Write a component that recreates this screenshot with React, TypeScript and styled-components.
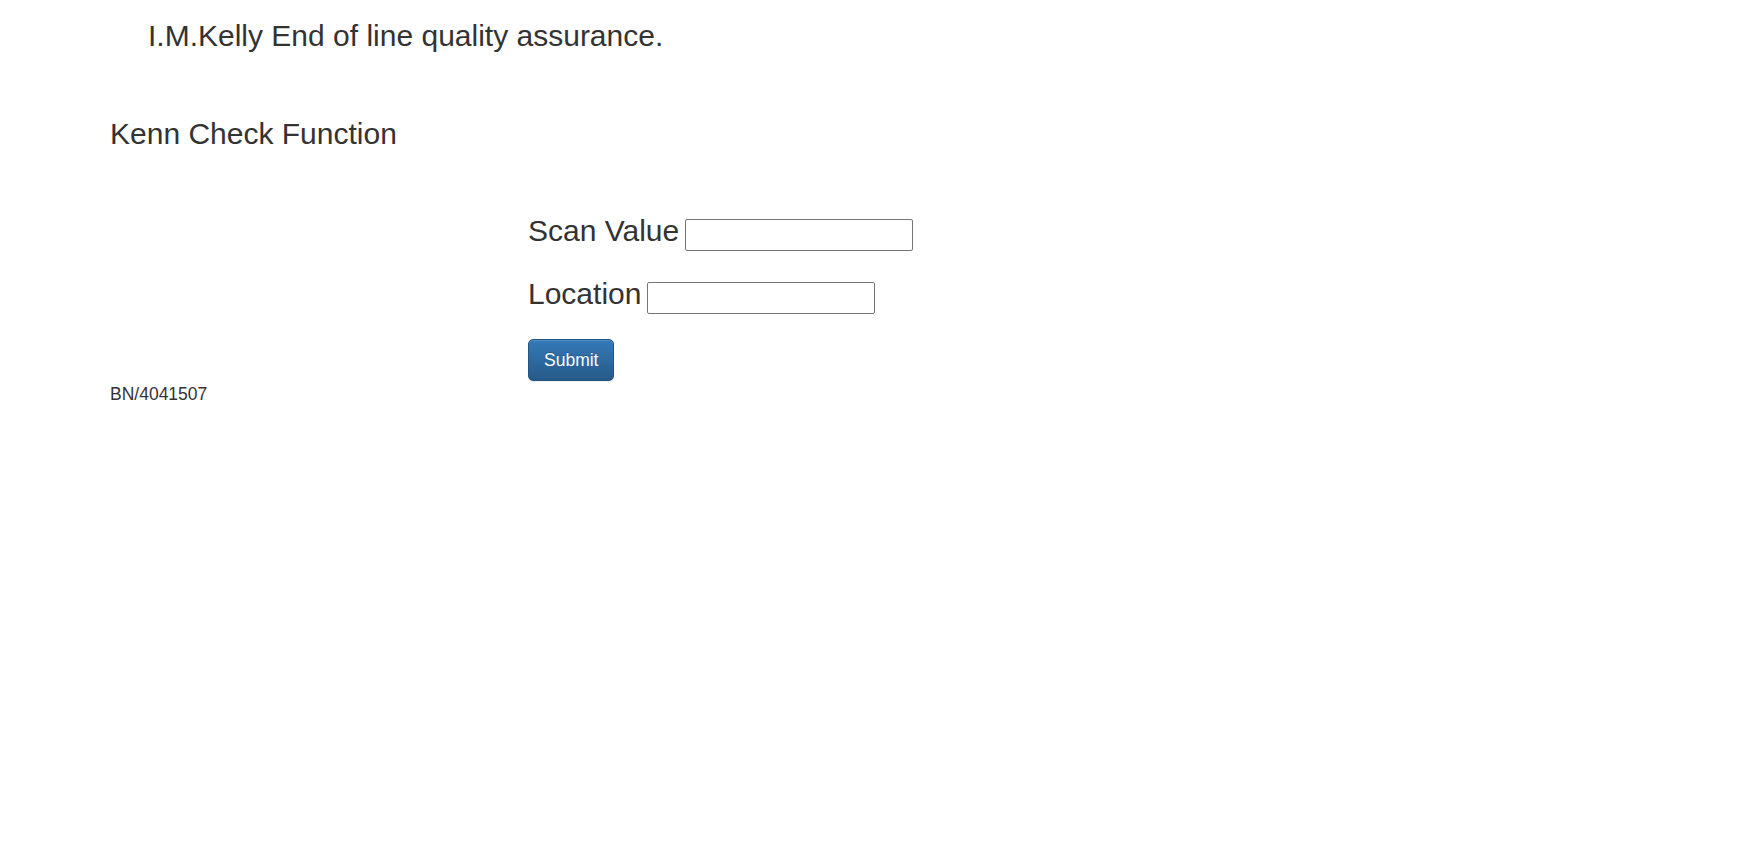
import React from "react";
import styled, { createGlobalStyle } from "styled-components";

const GlobalStyle = createGlobalStyle`
  html, body {
    margin: 0;
    padding: 0;
    background: #ffffff;
  }
  body {
    font-family: "Liberation Sans", Arial, Helvetica, sans-serif;
    font-size: 17.5px;
    line-height: 25px;
    color: #333333;
  }
  * { box-sizing: border-box; }
`;

const Page = styled.div`
  padding: 19px 0 0 110px;
`;

const SiteTitle = styled.h1`
  margin: 0;
  padding-left: 38px;
  font-size: 30px;
  line-height: 33px;
  font-weight: 400;
`;

const SectionHeading = styled.h3`
  margin: 65px 0 0 0;
  font-size: 30px;
  line-height: 33px;
  font-weight: 400;
`;

const FormArea = styled.form`
  margin: 64px 0 0 418px;
  display: flex;
  flex-direction: column;
  align-items: flex-start;
  gap: 27px;
`;

const FieldRow = styled.div`
  display: flex;
  align-items: flex-start;
  gap: 6px;
  height: 36px;
`;

const FieldLabel = styled.label`
  font-size: 30px;
  line-height: 33px;
`;

const TextInput = styled.input`
  margin-top: 5px;
  width: 228px;
  height: 32px;
  border: 1px solid #767676;
  border-radius: 2px;
  padding: 1px 2px;
  font-family: "Liberation Sans", Arial, sans-serif;
  font-size: 16px;
  background: #fff;
`;

const SubmitButton = styled.button`
  margin-top: -1px;
  font-family: "Liberation Sans", Arial, sans-serif;
  font-size: 17.5px;
  line-height: 25px;
  padding: 7.5px 15px;
  color: #ffffff;
  border: 1px solid #245580;
  border-radius: 5px;
  background-image: linear-gradient(to bottom, #337ab7 0%, #265a88 100%);
  box-shadow: inset 0 1px 0 rgba(255, 255, 255, 0.15), 0 1px 1px rgba(0, 0, 0, 0.075);
  text-shadow: 0 -1px 0 rgba(0, 0, 0, 0.2);
  cursor: pointer;
`;

const BatchNumber = styled.div`
  font-size: 17.5px;
  line-height: 25px;
  margin-top: 1px;
`;

export default function App() {
  return (
    <>
      <GlobalStyle />
      <Page>
        <SiteTitle>I.M.Kelly End of line quality assurance.</SiteTitle>
        <SectionHeading>Kenn Check Function</SectionHeading>
        <FormArea onSubmit={(e) => e.preventDefault()}>
          <FieldRow>
            <FieldLabel htmlFor="scan">Scan Value</FieldLabel>
            <TextInput id="scan" type="text" />
          </FieldRow>
          <FieldRow>
            <FieldLabel htmlFor="loc">Location</FieldLabel>
            <TextInput id="loc" type="text" />
          </FieldRow>
          <SubmitButton type="submit">Submit</SubmitButton>
        </FormArea>
        <BatchNumber>BN/4041507</BatchNumber>
      </Page>
    </>
  );
}
